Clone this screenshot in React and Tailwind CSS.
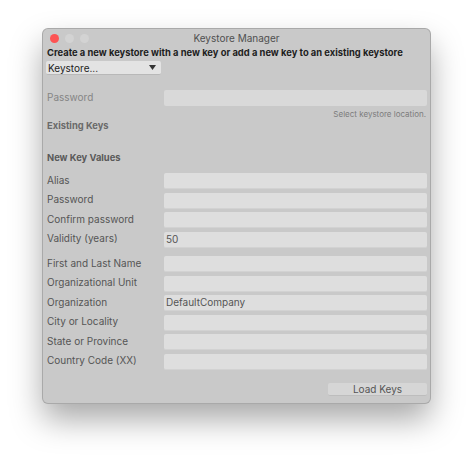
import React from "react";

const Field = ({ label, value = "", first = false }) => (
  <div className={`flex items-center h-[16px] ${first ? "" : "mt-[3.5px]"}`}>
    <span className="w-[118px] pl-[1px] text-[#555555] text-[10px] leading-[14px] -mt-[3px]">
      {label}
    </span>
    <div className="w-[263px] h-[16px] bg-[#dedede] rounded-[2px] border-b border-[#d2d2d2] text-[#555] text-[10px] leading-[15px] pl-[2px]">
      {value}
    </div>
  </div>
);

const App = () => {
  const keyFields = [
    { label: "Alias" },
    { label: "Password" },
    { label: "Confirm password" },
    { label: "Validity (years)", value: "50" },
  ];
  const ownerFields = [
    { label: "First and Last Name" },
    { label: "Organizational Unit" },
    { label: "Organization", value: "DefaultCompany" },
    { label: "City or Locality" },
    { label: "State or Province" },
    { label: "Country Code (XX)" },
  ];

  return (
    <div
      className="w-[474px] h-[460px] bg-white pt-[29px] pl-[43px]"
      style={{ fontFamily: "Inter, 'Noto Sans', sans-serif" }}
    >
      <div className="w-[387px] h-[374px] bg-[#c9c9c9] rounded-[5px] shadow-[0_0_0_1px_#a9a9a9,0_16px_32px_rgba(0,0,0,0.35)]">
        {/* Title bar */}
        <div className="relative h-[17px] flex items-center justify-center">
          <div className="absolute left-[7px] top-[5px] flex gap-[6px]">
            <span className="w-[9px] h-[9px] rounded-full bg-[#fd5454]" />
            <span className="w-[9px] h-[9px] rounded-full bg-[#d3d3d3]" />
            <span className="w-[9px] h-[9px] rounded-full bg-[#d3d3d3]" />
          </div>
          <span className="text-[10px] text-[#505050] mt-[2px]">Keystore Manager</span>
        </div>

        <div className="px-[3px]">
          <div className="h-[14px] pl-[1px] text-[9.4px] leading-[14px] font-bold text-[#1e1e1e] whitespace-nowrap">
            Create a new keystore with a new key or add a new key to an existing keystore
          </div>

          {/* Keystore dropdown */}
          <div className="mt-[1px] w-[115px] h-[14px] bg-[#e3e3e3] rounded-[2px] border-b border-[#b8b8b8] flex items-center justify-between px-[2px]">
            <span className="text-[10px] leading-[14px] text-[#1e1e1e]">Keystore...</span>
            <svg width="7" height="5" viewBox="0 0 7 5" className="mr-[3px]">
              <path d="M0 0h7L3.5 5z" fill="#333" />
            </svg>
          </div>

          {/* Password */}
          <div className="mt-[15px] flex items-center h-[16px]">
            <span className="w-[118px] pl-[1px] text-[#858585] text-[10px] leading-[14px] -mt-[3px]">
              Password
            </span>
            <div className="w-[263px] h-[16px] bg-[#d9d9d9] rounded-[2px]" />
          </div>
          <div className="mt-[3px] h-[10px] text-right pr-[1px] text-[8px] leading-[10px] text-[#7c7c7c]">
            Select keystore location.
          </div>

          <div className="h-[14px] pl-[1px] text-[9.4px] leading-[14px] font-bold text-[#6a6a6a]">
            Existing Keys
          </div>

          <div className="mt-[18px] h-[14px] pl-[1px] text-[9.4px] leading-[14px] font-bold text-[#5a5a5a]">
            New Key Values
          </div>

          <div className="mt-[8px]">
            {keyFields.map((f, i) => (
              <Field key={f.label + i} label={f.label} value={f.value} first={i === 0} />
            ))}
          </div>

          <div className="mt-[8.5px]">
            {ownerFields.map((f, i) => (
              <Field key={f.label} label={f.label} value={f.value} first={i === 0} />
            ))}
          </div>

          <div className="mt-[13.5px] flex justify-end">
            <button className="w-[99px] h-[13px] bg-[#d6d6d6] rounded-[2px] border-b border-[#bdbdbd] text-[10px] leading-[13px] text-[#555]">
              Load Keys
            </button>
          </div>
        </div>
      </div>
    </div>
  );
};

export default App;
